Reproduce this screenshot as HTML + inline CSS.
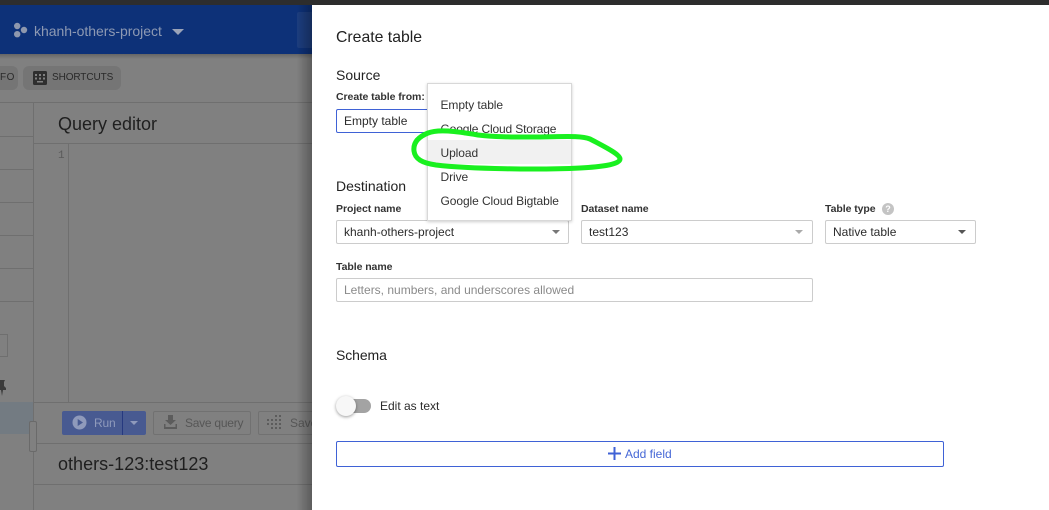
<!DOCTYPE html>
<html>
<head>
<meta charset="utf-8">
<style>
html,body{margin:0;padding:0;width:1049px;height:510px;overflow:hidden;background:#808080;}
body{position:relative;font-family:"Liberation Sans",sans-serif;color:#212121;}
.a{position:absolute;}
.t{position:absolute;white-space:nowrap;line-height:1;}
.box{position:absolute;box-sizing:border-box;background:#fff;border:1px solid #ccc;border-radius:2px;}
.lbl{position:absolute;white-space:nowrap;line-height:1;font-size:10.5px;font-weight:bold;color:#333;letter-spacing:-.06px;}
.val{position:absolute;white-space:nowrap;line-height:1;font-size:12px;color:#2b2b2b;}
.h{position:absolute;white-space:nowrap;line-height:1;font-size:14px;color:#222;}
.ln{position:absolute;background:#6f6f6f;}
.arr{position:absolute;width:0;height:0;border-left:4px solid transparent;border-right:4px solid transparent;border-top:4px solid #777;}
.mi{position:absolute;white-space:nowrap;line-height:1;font-size:12px;color:#333;left:440.5px;letter-spacing:-.08px;}
#w{position:absolute;left:0;top:0;width:1049px;height:510px;filter:blur(.3px);}
</style>
</head>
<body>
<div id="w">
<!-- top bars -->
<div class="a" style="left:0;top:0;width:1049px;height:5px;background:#2d2d2d;"></div>
<div class="a" style="left:0;top:5px;width:312px;height:49px;background:#0d3178;"></div>
<div class="a" style="left:297px;top:12px;width:15px;height:36px;background:#1c3d7e;border-radius:2px 0 0 2px;"></div>
<div class="a" style="left:0;top:54px;width:312px;height:5px;background:linear-gradient(#666,#808080);"></div>
<svg class="a" style="left:13px;top:22px;" width="16" height="16" viewBox="0 0 16 16"><circle cx="4.200" cy="4" r="3.200" fill="#8e98ae"/><circle cx="11" cy="8" r="3.200" fill="#8e98ae"/><circle cx="4.200" cy="12.200" r="3.200" fill="#8e98ae"/></svg>
<div class="t" style="left:34px;top:24px;font-size:14px;color:#8d99b3;letter-spacing:-.03px;">khanh-others-project</div>
<div class="arr" style="left:172px;top:29px;border-left-width:6px;border-right-width:6px;border-top:6px solid #9aa3b8;"></div>

<!-- toolbar chips -->
<div class="a" style="left:-10px;top:66px;width:28px;height:24px;background:#757575;border-radius:6px;"></div>
<div class="t" style="left:0;top:73px;font-size:10px;color:#2a2a2a;letter-spacing:.5px;">FO</div>
<div class="a" style="left:23px;top:66px;width:98px;height:24px;background:#757575;border-radius:6px;"></div>
<svg class="a" style="left:33px;top:71px;" width="14" height="14" viewBox="0 0 14 14"><rect width="14" height="14" rx="1.5" fill="#2e2e2e"/><g fill="#808080"><rect x="2" y="3" width="2" height="2"/><rect x="6" y="3" width="2" height="2"/><rect x="10" y="3" width="2" height="2"/><rect x="2" y="6.500" width="2" height="2"/><rect x="6" y="6.500" width="2" height="2"/><rect x="10" y="6.500" width="2" height="2"/><rect x="4" y="10" width="6" height="1.500"/></g></svg>
<div class="t" style="left:52px;top:73px;font-size:10px;color:#2a2a2a;letter-spacing:-.1px;">SHORTCUTS</div>

<!-- structure lines -->
<div class="ln" style="left:0;top:102px;width:312px;height:1px;"></div>
<div class="ln" style="left:33px;top:102px;width:1px;height:408px;"></div>
<div class="ln" style="left:34px;top:143px;width:278px;height:1px;"></div>
<div class="ln" style="left:68px;top:143px;width:1px;height:259px;"></div>
<div class="ln" style="left:34px;top:402px;width:278px;height:1px;"></div>
<div class="ln" style="left:34px;top:443px;width:278px;height:1px;"></div>
<div class="ln" style="left:34px;top:484px;width:278px;height:1px;"></div>
<div class="ln" style="left:0;top:136px;width:33px;height:1px;"></div>
<div class="ln" style="left:0;top:169px;width:33px;height:1px;"></div>
<div class="ln" style="left:0;top:202px;width:33px;height:1px;"></div>
<div class="ln" style="left:0;top:235px;width:33px;height:1px;"></div>
<div class="ln" style="left:0;top:268px;width:33px;height:1px;"></div>
<div class="ln" style="left:0;top:301px;width:33px;height:1px;"></div>
<div class="a" style="left:-5px;top:334px;width:13px;height:23px;box-sizing:border-box;border:1px solid #6f6f6f;"></div>
<svg class="a" style="left:0;top:379px;" width="6" height="18" viewBox="0 0 6 18"><path d="M0 1H5L4 3V7L6 9V11H3L2 17L1 11H0Z" fill="#3b3b3b"/></svg>
<div class="a" style="left:0;top:402px;width:33px;height:32px;background:#737b82;"></div>
<div class="a" style="left:29px;top:421px;width:8px;height:31px;box-sizing:border-box;border:1px solid #6a6a6a;border-radius:2px;background:#808080;"></div>

<div class="t" style="left:58px;top:115px;font-size:18px;color:#1f1f1f;">Query editor</div>
<div class="t" style="left:58px;top:151px;font-size:11px;color:#5a5a5a;font-family:'Liberation Mono',monospace;">1</div>

<!-- run row -->
<div class="a" style="left:62px;top:411px;width:84px;height:24px;background:#485a91;border-radius:2px;"></div>
<div class="a" style="left:122px;top:411px;width:1px;height:24px;background:#26397f;"></div>
<svg class="a" style="left:72px;top:415px;" width="15" height="15" viewBox="0 0 15 15"><circle cx="7.500" cy="7.500" r="7" fill="#8f9abb"/><path d="M5.700 4V11L11 7.500Z" fill="#485a91"/></svg>
<div class="t" style="left:94px;top:417px;font-size:12px;color:#8f9abb;letter-spacing:-.2px;">Run</div>
<div class="arr" style="left:130px;top:421px;border-top-color:#8f9abb;"></div>
<div class="a" style="left:153px;top:411px;width:98px;height:24px;box-sizing:border-box;border:1px solid #717171;border-radius:2px;"></div>
<svg class="a" style="left:164px;top:415px;" width="13" height="15" viewBox="0 0 13 15"><path d="M4 0H9V5H12L6.500 10L1 5H4Z M0 9H1.500V12H11.500V9H13V14H0Z" fill="#5c5c5c"/></svg>
<div class="t" style="left:185px;top:417px;font-size:12px;color:#565656;letter-spacing:-.25px;">Save query</div>
<div class="a" style="left:258px;top:411px;width:70px;height:24px;box-sizing:border-box;border:1px solid #717171;border-radius:2px;"></div>
<svg class="a" style="left:267px;top:415px;" width="16" height="15" viewBox="0 0 16 15" fill="#5c5c5c"><rect x="12" y="0" width="2" height="2"/><rect x="8" y="0" width="2" height="2"/><rect x="0" y="4" width="2" height="2"/><rect x="4" y="4" width="2" height="2"/><rect x="8" y="4" width="2" height="2"/><rect x="12" y="4" width="2" height="2"/><rect x="0" y="8" width="2" height="2"/><rect x="4" y="8" width="2" height="2"/><rect x="8" y="8" width="2" height="2"/><rect x="12" y="8" width="2" height="2"/><rect x="4" y="12" width="2" height="2"/><rect x="8" y="12" width="2" height="2"/><rect x="12" y="12" width="2" height="2"/></svg>
<div class="t" style="left:290px;top:417px;font-size:12px;color:#565656;">Save</div>
<div class="t" style="left:58px;top:455px;font-size:18px;color:#1f1f1f;letter-spacing:.02px;">others-123:test123</div>

<!-- shadow -->
<div class="a" style="left:297px;top:5px;width:15px;height:505px;background:linear-gradient(90deg,rgba(0,0,0,0),rgba(0,0,0,.28));"></div>

<!-- panel -->
<div class="a" style="left:312px;top:5px;width:737px;height:505px;background:#fff;"></div>
<div class="t" style="left:336px;top:30px;font-size:15.800px;color:#222;">Create table</div>
<div class="h" style="left:336px;top:68px;">Source</div>
<div class="lbl" style="left:336px;top:92px;">Create table from:</div>
<div class="a" style="left:336px;top:109px;width:110px;height:24px;box-sizing:border-box;border:1px solid #3f62d6;border-radius:2px;background:#fff;"></div>
<div class="val" style="left:344px;top:115px;">Empty table</div>

<div class="h" style="left:336px;top:179px;">Destination</div>
<div class="lbl" style="left:336px;top:204px;">Project name</div>
<div class="box" style="left:336px;top:220px;width:233px;height:24px;"></div>
<div class="val" style="left:344px;top:226px;">khanh-others-project</div>
<div class="arr" style="left:552px;top:230px;"></div>

<div class="lbl" style="left:581px;top:204px;">Dataset name</div>
<div class="box" style="left:581px;top:220px;width:232px;height:24px;"></div>
<div class="val" style="left:589px;top:226px;">test123</div>
<div class="arr" style="left:795px;top:230px;border-top-color:#aaa;"></div>

<div class="lbl" style="left:825px;top:204px;">Table type</div>
<div class="a" style="left:882px;top:203px;width:12px;height:12px;border-radius:50%;background:#c4c4c4;color:#fff;font-size:9px;font-weight:bold;line-height:12px;text-align:center;">?</div>
<div class="box" style="left:825px;top:220px;width:151px;height:24px;"></div>
<div class="val" style="left:833px;top:226px;">Native table</div>
<div class="arr" style="left:958px;top:230px;border-top-color:#555;"></div>

<div class="lbl" style="left:336px;top:262px;">Table name</div>
<div class="box" style="left:336px;top:278px;width:477px;height:24px;"></div>
<div class="val" style="left:344px;top:284px;color:#8a8a8a;">Letters, numbers, and underscores allowed</div>

<div class="h" style="left:336px;top:348px;letter-spacing:-.1px;">Schema</div>
<div class="a" style="left:342px;top:399px;width:29px;height:14px;background:#a3a3a3;border-radius:7px;"></div>
<div class="a" style="left:336px;top:396px;width:20px;height:20px;background:#f7f7f7;border-radius:50%;box-shadow:0 1px 3px rgba(0,0,0,.4);"></div>
<div class="val" style="left:380px;top:400px;">Edit as text</div>
<div class="a" style="left:336px;top:441px;width:608px;height:26px;box-sizing:border-box;border:1px solid #3f62d6;border-radius:2px;"></div>
<svg class="a" style="left:608px;top:447px;" width="13" height="13" viewBox="0 0 13 13"><path d="M5.500 0H7.500V5.500H13V7.500H7.500V13H5.500V7.500H0V5.500H5.500Z" fill="#3f62d6"/></svg>
<div class="val" style="left:625px;top:448px;color:#4567d6;">Add field</div>

<!-- dropdown -->
<div class="a" style="left:427px;top:83px;width:145px;height:138px;box-sizing:border-box;background:#fff;border:1px solid #d8d8d8;box-shadow:0 1px 3px rgba(0,0,0,.2);"></div>
<div class="a" style="left:428px;top:140px;width:143px;height:24px;background:#f1f1f1;"></div>
<div class="mi" style="top:99px;">Empty table</div>
<div class="mi" style="top:123px;letter-spacing:-.15px;">Google Cloud Storage</div>
<div class="mi" style="top:147px;">Upload</div>
<div class="mi" style="top:171px;">Drive</div>
<div class="mi" style="top:195px;">Google Cloud Bigtable</div>

<!-- highlight -->
<svg class="a" style="left:0;top:0;" width="1049" height="510" viewBox="0 0 1049 510"><path d="M478 135C455 131 438 129 428 133C418 137 413 143 414 151C415 159 422 163 436 165C470 169 540 170 580 168C598 167 620 165 620 159C620 154 603 146 590 139C580 135 560 137 530 137C510 137 495 137 478 135Z" fill="none" stroke="#19f01f" stroke-width="5" stroke-linecap="round" stroke-linejoin="round"/></svg>
</div>
</body>
</html>
